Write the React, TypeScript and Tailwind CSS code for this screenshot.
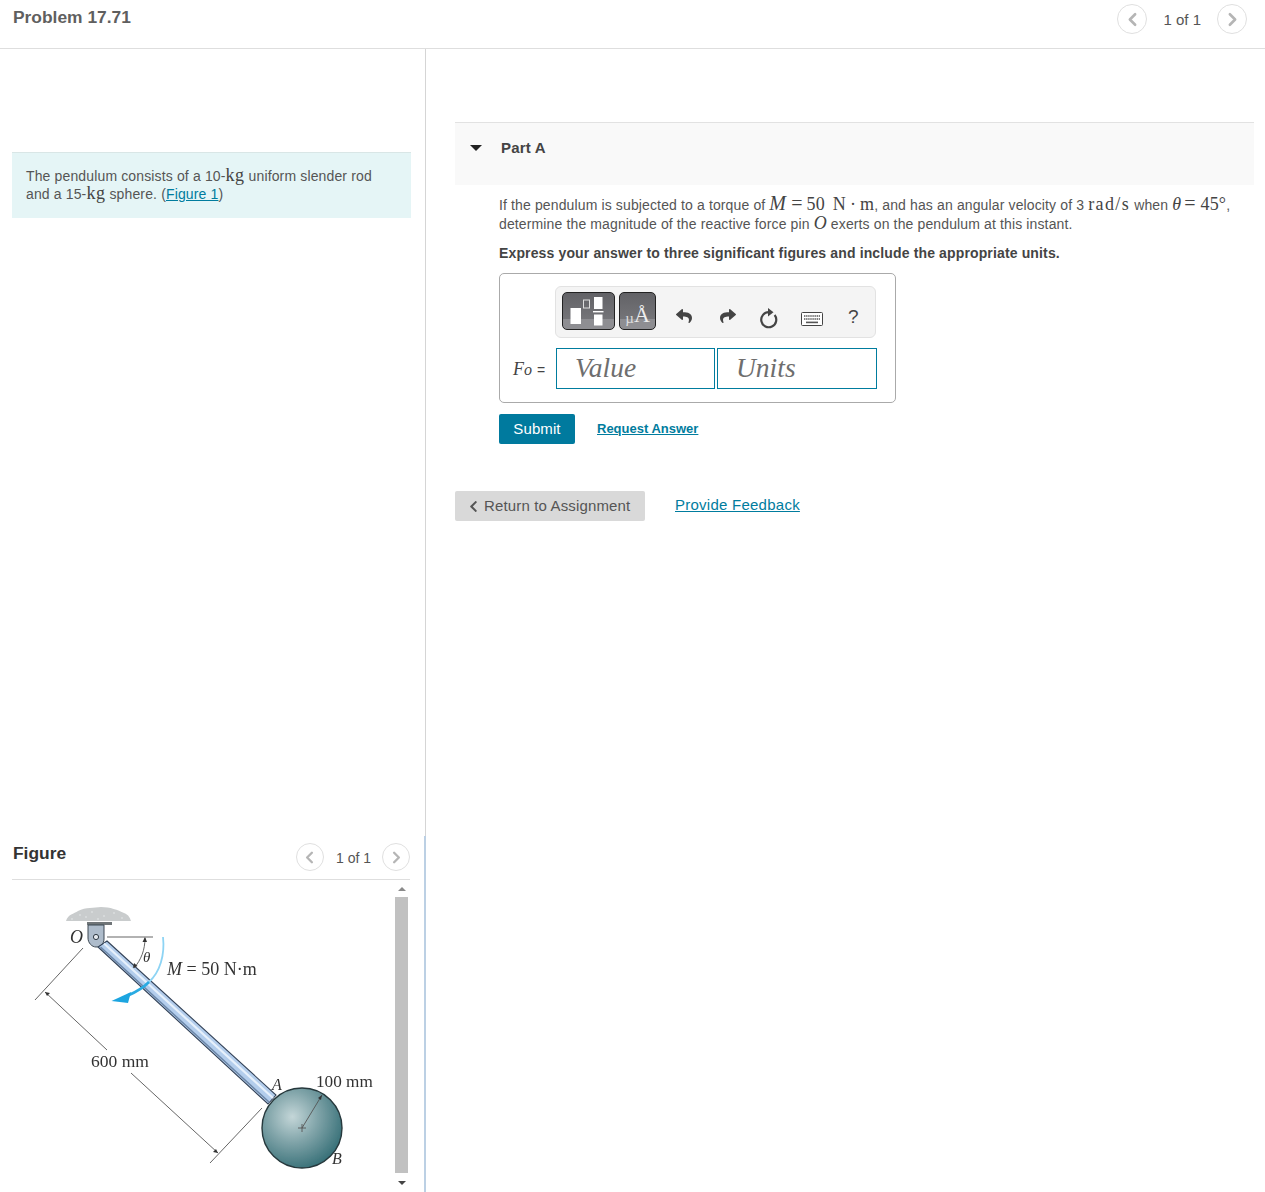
import React from "react";
import { FaReply, FaShare, FaChevronLeft } from "react-icons/fa";
import { ChevronLeft, ChevronRight } from "lucide-react";

const Math1 = ({ children, className = "" }: { children: React.ReactNode; className?: string }) => (
  <span className={`font-['Liberation_Serif',serif] text-[#444] text-[18px] leading-[0] ${className}`}>{children}</span>
);

const Pager = ({ big }: { big?: boolean }) => {
  const circle = `${big ? "w-[30px] h-[30px]" : "w-[28px] h-[28px]"} rounded-full border border-[#e0e0e0] flex items-center justify-center text-[#b5b5b5]`;
  return (
    <div className="flex items-center">
      <div className={circle}><ChevronLeft size={big ? 21 : 19} strokeWidth={3} /></div>
      <span className={`${big ? "ml-[16px] mr-[16px] text-[15px] mt-[1px]" : "ml-[12px] mr-[11px] text-[14px] mt-[2px]"} text-[#555] leading-none`}>1 of 1</span>
      <div className={circle}><ChevronRight size={big ? 21 : 19} strokeWidth={3} /></div>
    </div>
  );
};

const FigureArt = () => (
  <svg viewBox="12 880 383 312" className="w-[383px] h-[312px] block shrink-0">
    <defs>
      <radialGradient id="ball" cx="0.38" cy="0.36" r="0.72">
        <stop offset="0" stopColor="#c4d6d8" />
        <stop offset="0.45" stopColor="#7fa3a8" />
        <stop offset="1" stopColor="#2f6a72" />
      </radialGradient>
      <filter id="soft"><feGaussianBlur stdDeviation="0.4" /></filter>
      <filter id="softer"><feGaussianBlur stdDeviation="0.25" /></filter>
    </defs>
    <g filter="url(#soft)">
      <path d="M66 921 C68 914 74 914 78 911 C86 907 94 908 101 907 C110 907 118 910 124 913 C129 915 130 918 131 921 Z" fill="#c9cccd" />
      <g fill="#eef0f0">
        <circle cx="80" cy="915" r="0.7" /><circle cx="92" cy="912" r="0.7" /><circle cx="104" cy="916" r="0.7" />
        <circle cx="114" cy="913" r="0.7" /><circle cx="122" cy="918" r="0.7" /><circle cx="72" cy="919" r="0.7" />
        <circle cx="98" cy="919" r="0.7" /><circle cx="86" cy="917" r="0.7" />
      </g>
      <rect x="87" y="922" width="25" height="3" fill="#6f7478" />
      <path d="M88 925 H104 V939 C104 944 100 947 96 947 C92 947 88 943 88 938 Z" fill="#aebccb" stroke="#3d4852" strokeWidth="1" />
      <path d="M107 941 L276 1095 L268 1104 L98 947 Z" fill="#b3cdec" stroke="#334257" strokeWidth="1.1" />
      <path d="M104 943.5 L273 1098" stroke="#e6f0fb" strokeWidth="2.2" fill="none" />
      <path d="M100.5 947 L269.5 1102.5" stroke="#6c87a8" strokeWidth="1.5" fill="none" />
      <circle cx="96" cy="937" r="2.6" fill="#e5e9ee" stroke="#2f3a44" strokeWidth="1" />
      <circle cx="302" cy="1128" r="40" fill="url(#ball)" stroke="#26383c" strokeWidth="1.4" />
      <g stroke="#555" strokeWidth="0.9" fill="none">
        <path d="M107 937 H153" />
        <path d="M145 938 C145 950 141 960 134 968" />
        <path d="M83 948 L35 1000" />
        <path d="M45 992 L107 1050" />
        <path d="M131 1073 L218 1153" />
        <path d="M262 1108 L210 1163" />
        <path d="M302 1128 L322 1095" />
        <path d="M298 1128 H306 M302 1124 V1132" />
      </g>
      <g fill="#333">
        <path d="M145 937 L142.5 942 L147 942 Z" />
        <path d="M133 968 L134 963 L137.5 966 Z" />
        <path d="M45 992 L50 993 L47 996 Z" />
        <path d="M218 1153 L213 1152 L216 1149 Z" />
        <path d="M322 1095 L321 1100 L318 1098 Z" />
      </g>
      <path d="M163 937 C165 955 160 972 149 982" stroke="#8ed4f4" strokeWidth="1.8" fill="none" />
      <path d="M149 982 C143 988 136 992 128 995.5" stroke="#29abe2" strokeWidth="2.6" fill="none" />
      <path d="M111.5 1001 L131 992 L128 1003 Z" fill="#1fa5e0" />
    </g>
    <g fontFamily="'Liberation Serif',serif" fill="#333" fontSize="17.5" filter="url(#softer)">
      <text x="70" y="943" fontStyle="italic" fontSize="18">O</text>
      <text x="143" y="962" fontStyle="italic" fontSize="15">θ</text>
      <text x="167" y="975" fontSize="18">
        <tspan fontStyle="italic">M</tspan> = 50 N·m
      </text>
      <text x="91" y="1067">600 mm</text>
      <text x="316" y="1087" fontSize="17.2">100 mm</text>
      <text x="272" y="1090" fontStyle="italic" fontSize="16">A</text>
      <text x="332" y="1164" fontStyle="italic" fontSize="16">B</text>
    </g>
  </svg>
);

const Scrollbar = () => (
  <div className="w-[13px] h-[312px] flex flex-col items-center shrink-0 bg-white">
    <div className="h-[17px] flex items-center justify-center">
      <div className="w-0 h-0 border-x-[4px] border-x-transparent border-b-[4px] border-b-[#8a8a8a]" />
    </div>
    <div className="w-[13px] h-[276px] bg-[#c1c1c1] shrink-0" />
    <div className="h-[19px] flex items-center justify-center">
      <div className="w-0 h-0 border-x-[4px] border-x-transparent border-t-[4px] border-t-[#444]" />
    </div>
  </div>
);

const btn = "h-[38px] rounded-[5px] border border-[#222] bg-[linear-gradient(#626266_0,#747478_72%,#8e8e92_72%,#8e8e92_100%)] shrink-0";

const Toolbar = () => (
  <div className="ml-[55px] w-[321px] h-[52px] bg-[#f4f4f4] border border-[#e2e2e2] rounded-[6px] flex items-start pl-[6px] pt-[5px]">
    <div className={`w-[53px] ${btn}`}>
      <svg width="51" height="36" viewBox="0 0 51 36" className="block">
        <rect x="7.5" y="15" width="10.5" height="16" fill="#fff" />
        <rect x="20.5" y="7" width="6" height="8" fill="none" stroke="#ddd" strokeWidth="1" />
        <rect x="31" y="4" width="8.5" height="12" fill="#fff" />
        <rect x="30" y="18" width="10.5" height="1.4" fill="#fff" />
        <rect x="31" y="21.5" width="8.5" height="11" fill="#fff" />
      </svg>
    </div>
    <div className={`ml-[4px] w-[37px] ${btn} flex items-end justify-center pb-[3px] font-['Liberation_Serif',serif] text-[#ddd] leading-none`}>
      <span className="text-[15px]">µ</span>
      <span className="text-[22px] text-[#eee]">Å</span>
    </div>
    <div className="ml-[20px] mt-[16px] text-[#444]"><FaReply size={16} /></div>
    <div className="ml-[28px] mt-[16px] text-[#444]"><FaShare size={16} /></div>
    <svg width="20" height="22" viewBox="0 0 20 22" className="ml-[23px] mt-[15px] block" fill="none">
      <path d="M15.6 8 A7.5 7.5 0 1 1 10 5.2" stroke="#444" strokeWidth="2.2" />
      <path d="M9 1 L14.5 5.2 L9 9.4 Z" fill="#444" />
    </svg>
    <svg width="22" height="14" viewBox="0 0 22 14" className="ml-[22px] mt-[20px] block">
      <rect x="0.5" y="0.5" width="21" height="13" rx="1" fill="#fff" stroke="#444" />
      <path d="M3 4H19M3 7H19" stroke="#555" strokeWidth="1.6" strokeDasharray="1.4 0.7" />
      <path d="M5 10.4H17" stroke="#555" strokeWidth="1.6" />
    </svg>
    <span className="ml-[25px] mt-[13px] text-[19px] leading-[24px] text-[#444]">?</span>
  </div>
);

export default function App() {
  return (
    <div className="w-[1265px] h-[1192px] overflow-hidden bg-white font-['Liberation_Sans',Arial,sans-serif] text-[#555]">
      <header className="h-[49px] border-b border-[#dedede] flex items-start justify-between pl-[13px] pr-[18px]">
        <h1 className="text-[17.4px] font-bold leading-[20px] mt-[7px] text-[#5f5f5f]">Problem 17.71</h1>
        <div className="mt-[4px]"><Pager big /></div>
      </header>
      <div className="flex h-[1143px]">
        <aside className="relative w-[426px] h-full border-r border-[#d5d5d5] shrink-0 pl-[12px] pr-[14px] pt-[103px]">
          <div className="absolute right-[-1px] top-[787px] bottom-0 w-[2px] bg-[#bcd0e4]" />
          <div className="h-[66px] bg-[#e5f5f6] border-t border-[#d9e6e6] pl-[14px] pt-[14px] text-[14px] leading-[18px] tracking-[0.14px] text-[#555]">
            <p>
              The pendulum consists of a 10-<Math1 className="tracking-[0.5px]">kg</Math1> uniform slender rod
              <br />
              and a 15-<Math1 className="tracking-[0.5px]">kg</Math1> sphere. (<a className="text-[#007c9e] underline">Figure 1</a>)
            </p>
          </div>
          <div className="mt-[619px] mr-[1px] flex items-start justify-between h-[43px] border-b border-[#dedede]">
            <h2 className="ml-[1px] text-[17.4px] font-bold leading-[20px] mt-[6px] text-[#333]">Figure</h2>
            <div className="mt-[6px]"><Pager /></div>
          </div>
          <div className="flex">
            <FigureArt />
            <Scrollbar />
          </div>
        </aside>
        <main className="flex-1 pl-[29px] pt-[73px] pr-[11px]">
          <div className="h-[63px] bg-[#f9f9f9] border-t border-[#e2e2e2] flex items-start pt-[17px] pl-[15px]">
            <div className="w-0 h-0 mt-[5px] border-x-[6px] border-x-transparent border-t-[6px] border-t-[#222]" />
            <span className="ml-[19px] text-[15px] font-bold tracking-[0.2px] leading-[15px] text-[#444]">Part A</span>
          </div>
          <div className="pl-[44px]">
            <p className="mt-[11px] text-[14px] leading-[19px] tracking-[0.13px] text-[#555] whitespace-nowrap">
              If the pendulum is subjected to a torque of <Math1 className="italic text-[20px]">M</Math1>
              <Math1 className="ml-[5px] text-[20px]">=</Math1>
              <Math1 className="ml-[4px]">50</Math1>
              <Math1 className="ml-[8px]">N</Math1>
              <Math1 className="ml-[4px]">·</Math1>
              <Math1 className="ml-[4px]">m</Math1>, and has an angular velocity of 3 <Math1 className="tracking-[1.4px]">rad/s</Math1> when <Math1 className="italic">θ</Math1>
              <Math1 className="ml-[3px] text-[20px]">=</Math1>
              <Math1 className="ml-[5px]">45°</Math1>,
              <br />
              determine the magnitude of the reactive force pin <Math1 className="italic">O</Math1> exerts on the pendulum at this instant.
            </p>
            <p className="mt-[10px] text-[14px] font-bold leading-[19px] tracking-[0.14px] text-[#444]">
              Express your answer to three significant figures and include the appropriate units.
            </p>
            <div className="mt-[10px] w-[397px] h-[130px] border border-[#aaa] rounded-[5px] pt-[12px]">
              <Toolbar />
              <div className="flex items-center mt-[10px] h-[41px]">
                <span className="w-[56px] pl-[13px] text-[14px] leading-none whitespace-nowrap text-[#444]">
                  <span className="font-['Liberation_Serif',serif] italic text-[18px]">F</span>
                  <span className="font-['Liberation_Serif',serif] italic text-[16px]">o</span>
                  <span className="ml-[5px]">=</span>
                </span>
                <div className="w-[159px] h-[41px] border border-[#007c9e] pl-[18px] font-['Liberation_Serif',serif] italic text-[27.5px] leading-[37px] text-[#6e6e6e]">Value</div>
                <div className="ml-[2px] w-[160px] h-[41px] border border-[#007c9e] pl-[18px] font-['Liberation_Serif',serif] italic text-[27.5px] leading-[37px] text-[#6e6e6e]">Units</div>
              </div>
            </div>
            <div className="mt-[11px] flex items-center">
              <button className="w-[76px] h-[30px] bg-[#007a9e] rounded-[2px] text-white text-[15px] tracking-[0.1px] font-normal">Submit</button>
              <a className="ml-[22px] text-[13px] font-bold underline text-[#007c9e]">Request Answer</a>
            </div>
          </div>
          <div className="mt-[47px] flex items-center">
            <button className="w-[190px] h-[30px] bg-[#d9d9d9] rounded-[2px] flex items-center pl-[12px] text-[15px] tracking-[0.15px] text-[#555]">
              <FaChevronLeft size={13} className="mr-[4px]" />
              Return to Assignment
            </button>
            <a className="ml-[30px] -mt-[2px] text-[15px] tracking-[0.25px] underline text-[#007c9e]">Provide Feedback</a>
          </div>
        </main>
      </div>
    </div>
  );
}
